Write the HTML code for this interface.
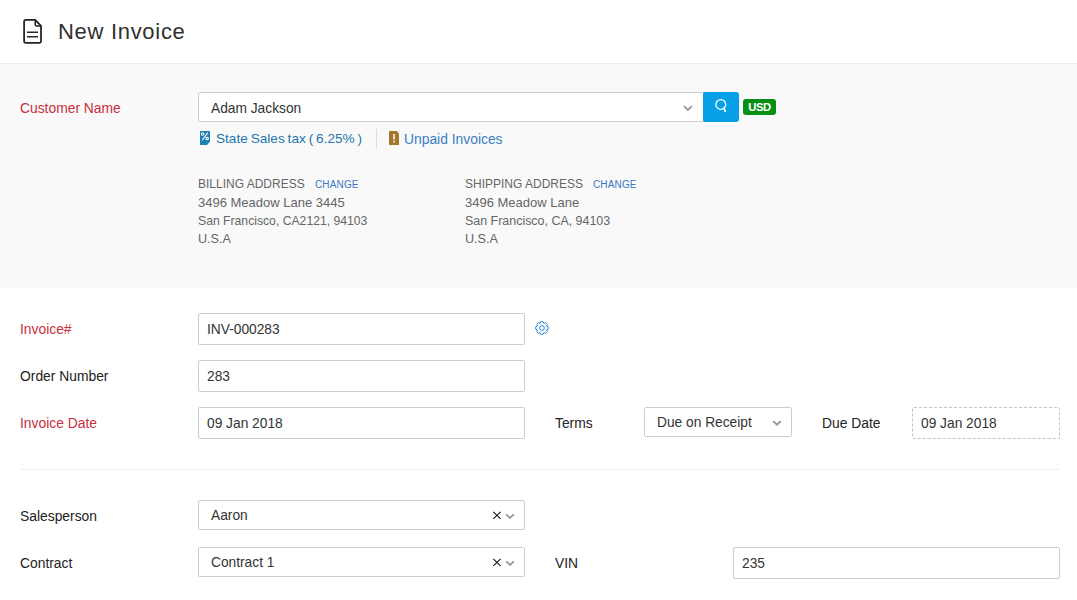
<!DOCTYPE html>
<html><head><meta charset="utf-8">
<style>
*{box-sizing:border-box;margin:0;padding:0}
html,body{width:1077px;height:600px;overflow:hidden;background:#fff;font-family:"Liberation Sans",sans-serif;color:#222}
.a{position:absolute;white-space:nowrap}
.hdr{position:absolute;left:0;top:0;width:1077px;height:64px;border-bottom:1px solid #ececec;background:#fff}
.gray{position:absolute;left:0;top:64px;width:1077px;height:224px;background:#f9f9f9}
.lbl{font-size:13.85px;line-height:16px;color:#222}
.red{color:#c62f3e}
.inp{position:absolute;background:#fff;border:1px solid #ccc;border-radius:2px}
.txt{font-size:13.75px;line-height:16px;color:#333}
.addr{font-size:12.6px;line-height:18px;color:#666}
.chg{font-size:10px;letter-spacing:0.15px;color:#3a78c2}
.link{font-size:13.6px;line-height:16px;color:#2a7bb4}
.hr{position:absolute;left:20px;top:469px;width:1040px;height:1px;background:#efefef}
</style></head><body>
<div class="hdr"></div>
<svg class="a" style="left:20px;top:16px" width="26" height="30" viewBox="0 0 26 30">
<path d="M6 3.9 H15.2 L21 9.9 V24.9 Q21 26.75 19.2 26.75 H5.9 Q4.1 26.75 4.1 24.9 V5.7 Q4.1 3.9 6 3.9 Z" fill="none" stroke="#222" stroke-width="1.75" stroke-linejoin="round"/>
<path d="M15.2 4.2 V8.6 Q15.2 10.1 16.7 10.1 H20.8" fill="none" stroke="#222" stroke-width="1.5"/>
<path d="M7 16.25 H18 M7 20.75 H18" stroke="#2a2a2a" stroke-width="1.4"/>
</svg>
<div class="a" style="left:58px;top:18px;font-size:22px;line-height:28px;letter-spacing:0.7px;color:#303030">New Invoice</div>

<div class="gray"></div>
<div class="a lbl red" style="left:20px;top:100px">Customer Name</div>
<div class="inp" style="left:198px;top:92px;width:506px;height:30px;border-radius:2px 0 0 2px"></div>
<div class="a txt" style="left:211px;top:101px">Adam Jackson</div>
<svg class="a" style="left:682px;top:104px" width="12" height="9" viewBox="0 0 12 9"><path d="M2 2.3 L5.9 5.9 L9.8 2.3" fill="none" stroke="#999" stroke-width="1.9"/></svg>
<div class="a" style="left:703px;top:92px;width:36px;height:30px;background:#079fe6;border-radius:2px 3px 3px 2px"></div>
<svg class="a" style="left:712px;top:96px" width="18" height="20" viewBox="0 0 18 20"><circle cx="8.8" cy="8.4" r="4.9" fill="none" stroke="#fff" stroke-width="1.25"/><path d="M11.9 12.3 L13.3 15.4" stroke="#fff" stroke-width="1.8" stroke-linecap="round"/></svg>
<div class="a" style="left:743px;top:99px;width:33px;height:16px;background:#068f13;border-radius:3px;color:#fff;font-weight:bold;font-size:11.3px;line-height:16px;letter-spacing:-0.4px;text-align:center">USD</div>

<svg class="a" style="left:200px;top:131px" width="10" height="14" viewBox="0 0 10 14"><path d="M0 0.5 Q0 0 0.5 0 H9.5 Q10 0 10 0.5 V10.5 L7 14 H0.5 Q0 14 0 13.5 Z" fill="#1f80b2"/>
<circle cx="2.6" cy="3" r="1.2" fill="none" stroke="#fff" stroke-width="1.1"/><circle cx="7.2" cy="7.6" r="1.2" fill="none" stroke="#fff" stroke-width="1.1"/><path d="M7.8 1.6 L2.3 9.2" stroke="#fff" stroke-width="1.1"/></svg>
<div class="a link" style="left:216px;top:131px;word-spacing:-0.85px;color:#2576ab">State Sales tax ( 6.25% )</div>
<div class="a" style="left:376px;top:129px;width:1px;height:20px;background:#dcdcdc"></div>
<svg class="a" style="left:389px;top:131px" width="10" height="14" viewBox="0 0 10 14"><path d="M0.5 0 H7.8 L10 2.4 V13.5 Q10 14 9.5 14 H0.5 Q0 14 0 13.5 V0.5 Q0 0 0.5 0 Z" fill="#a3782c"/><rect x="4.3" y="3" width="1.5" height="5.5" fill="#fff"/><rect x="4.3" y="9.7" width="1.5" height="1.6" fill="#fff"/></svg>
<div class="a link" style="left:404px;top:131px;font-size:13.85px;color:#3a7fc4">Unpaid Invoices</div>

<div class="a addr" style="left:198px;top:175px;font-size:12px">BILLING ADDRESS</div>
<div class="a chg" style="left:315px;top:179px">CHANGE</div>
<div class="a addr" style="left:198px;top:194px;font-size:13px">3496 Meadow Lane 3445</div>
<div class="a addr" style="left:198px;top:212px;font-size:12.2px">San Francisco, CA2121, 94103</div>
<div class="a addr" style="left:198px;top:230px">U.S.A</div>

<div class="a addr" style="left:465px;top:175px;font-size:12px">SHIPPING ADDRESS</div>
<div class="a chg" style="left:593px;top:179px">CHANGE</div>
<div class="a addr" style="left:465px;top:194px;font-size:13px">3496 Meadow Lane</div>
<div class="a addr" style="left:465px;top:212px;font-size:12.45px">San Francisco, CA, 94103</div>
<div class="a addr" style="left:465px;top:230px">U.S.A</div>

<div class="a lbl red" style="left:20px;top:321px">Invoice#</div>
<div class="inp" style="left:198px;top:313px;width:327px;height:32px"></div>
<div class="a txt" style="left:207px;top:322px">INV-000283</div>
<svg class="a" style="left:534px;top:320px" width="16" height="16" viewBox="0 0 16 16"><path d="M6.16 3.46 L6.78 1.72 L9.22 1.72 L9.84 3.46 L9.91 3.49 L11.58 2.69 L13.31 4.42 L12.51 6.09 L12.54 6.16 L14.28 6.78 L14.28 9.22 L12.54 9.84 L12.51 9.91 L13.31 11.58 L11.58 13.31 L9.91 12.51 L9.84 12.54 L9.22 14.28 L6.78 14.28 L6.16 12.54 L6.09 12.51 L4.42 13.31 L2.69 11.58 L3.49 9.91 L3.46 9.84 L1.72 9.22 L1.72 6.78 L3.46 6.16 L3.49 6.09 L2.69 4.42 L4.42 2.69 L6.09 3.49 Z" fill="none" stroke="#2c83c8" stroke-width="0.95" stroke-linejoin="round"/><circle cx="8" cy="8" r="2.3" fill="none" stroke="#2c83c8" stroke-width="1"/></svg>

<div class="a lbl" style="left:20px;top:368px">Order Number</div>
<div class="inp" style="left:198px;top:360px;width:327px;height:32px"></div>
<div class="a txt" style="left:207px;top:369px">283</div>

<div class="a lbl red" style="left:20px;top:415px">Invoice Date</div>
<div class="inp" style="left:198px;top:407px;width:327px;height:32px"></div>
<div class="a txt" style="left:207px;top:416px">09 Jan 2018</div>

<div class="a lbl" style="left:555px;top:415px">Terms</div>
<div class="inp" style="left:644px;top:407px;width:148px;height:30px"></div>
<div class="a txt" style="left:657px;top:415px">Due on Receipt</div>
<svg class="a" style="left:771px;top:419px" width="12" height="9" viewBox="0 0 12 9"><path d="M2.2 2.1 L6 5.6 L9.8 2.1" fill="none" stroke="#999" stroke-width="1.9"/></svg>

<div class="a lbl" style="left:822px;top:415px">Due Date</div>
<div class="a" style="left:912px;top:407px;width:148px;height:32px;border:1px dashed #c4c4c4;border-radius:2px;background:#fff"></div>
<div class="a txt" style="left:921px;top:416px">09 Jan 2018</div>

<div class="hr"></div>

<div class="a lbl" style="left:20px;top:508px">Salesperson</div>
<div class="inp" style="left:198px;top:500px;width:327px;height:30px"></div>
<div class="a txt" style="left:211px;top:508px">Aaron</div>
<svg class="a" style="left:492px;top:510px" width="10" height="10" viewBox="0 0 10 10"><path d="M1.3 1.9 L8.6 8.9 M8.6 1.9 L1.3 8.9" stroke="#1a1a1a" stroke-width="1.15"/></svg>
<svg class="a" style="left:504px;top:512px" width="12" height="9" viewBox="0 0 12 9"><path d="M2.2 2.4 L6 5.9 L9.8 2.4" fill="none" stroke="#999" stroke-width="1.9"/></svg>

<div class="a lbl" style="left:20px;top:555px">Contract</div>
<div class="inp" style="left:198px;top:547px;width:327px;height:30px"></div>
<div class="a txt" style="left:211px;top:555px">Contract 1</div>
<svg class="a" style="left:492px;top:557px" width="10" height="10" viewBox="0 0 10 10"><path d="M1.3 1.9 L8.6 8.9 M8.6 1.9 L1.3 8.9" stroke="#1a1a1a" stroke-width="1.15"/></svg>
<svg class="a" style="left:504px;top:559px" width="12" height="9" viewBox="0 0 12 9"><path d="M2.2 2.4 L6 5.9 L9.8 2.4" fill="none" stroke="#999" stroke-width="1.9"/></svg>

<div class="a lbl" style="left:555px;top:555px">VIN</div>
<div class="inp" style="left:733px;top:547px;width:327px;height:32px"></div>
<div class="a txt" style="left:742px;top:556px">235</div>
</body></html>
